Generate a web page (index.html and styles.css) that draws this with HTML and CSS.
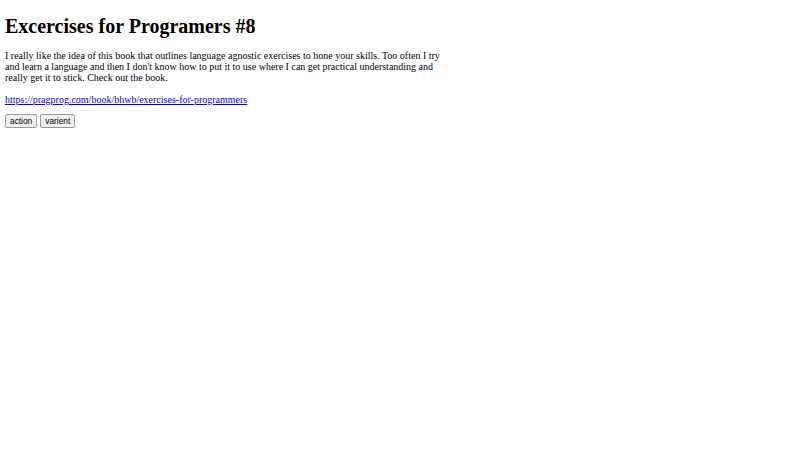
FILE: index.html
```html
<!DOCTYPE html>
<html>
<head>
<meta charset="utf-8">
<link rel="stylesheet" href="styles.css">
</head>
<body class="page">
<h1 class="title">Excercises for Programers #8</h1>
<p class="intro">I really like the idea of this book that outlines language agnostic exercises to hone your skills. Too often I try and learn a language and then I don't know how to put it to use where I can get practical understanding and really get it to stick. Check out the book.</p>
<p class="link-row"><a class="link" href="https://pragprog.com/book/bhwb/exercises-for-programmers">https://pragprog.com/book/bhwb/exercises-for-programmers</a></p>
<div class="actions">
<button class="btn">action</button>
<button class="btn">varient</button>
</div>
</body>
</html>
```
FILE: styles.css
```css
html { background: #fff; }
.page {
  margin: 5px;
  font-family: "Liberation Serif", "Times New Roman", serif;
  font-size: 10px;
  color: #000;
}
.title {
  font-size: 20px;
  font-weight: bold;
  margin: 9.5px 0 12.5px;
}
.intro {
  width: 440px;
  margin: 10px 0 11px;
}
.link-row { margin: 11px 0 9px; }
.link { color: #0000ee; }
.actions { display: flex; gap: 3px; }
.btn {
  font-family: "Liberation Sans", Arial, sans-serif;
  font-size: 8.33px;
  padding: 1px 4px;
  border: 1px solid #9a9a9a;
  border-radius: 2px;
  background: #efefef;
  color: #000;
}
```
